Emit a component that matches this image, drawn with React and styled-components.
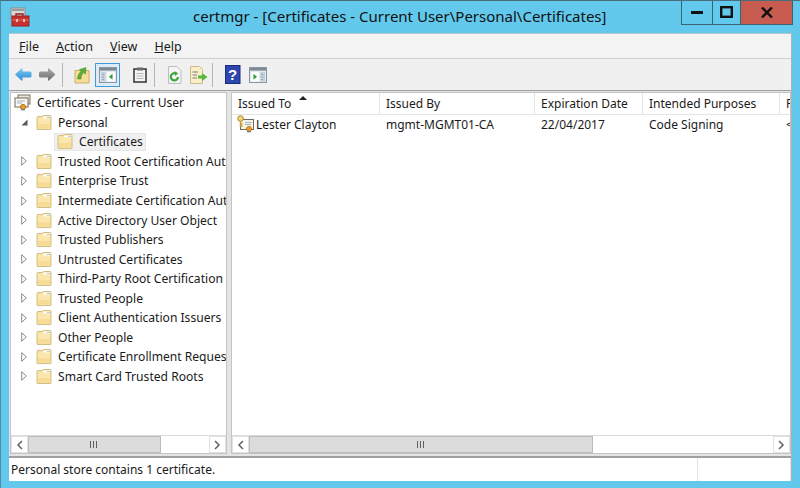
import React from 'react';
import styled, { createGlobalStyle } from 'styled-components';

const GlobalStyle = createGlobalStyle`
  html, body { margin: 0; padding: 0; background: #62c9ec; }
  body { font-family: "Noto Sans", "Open Sans", sans-serif; }
`;

const Win = styled.div`
  width: 800px;
  height: 488px;
  box-sizing: border-box;
  background: #62c9ec;
  border-top: 1px solid #4a6d7c;
  border-left: 1px solid #4f8ea6;
  overflow: hidden;
  display: flex;
  flex-direction: column;
  padding: 0 8px 7px 8px;
  color: #1a1a1a;
`;

const TitleBar = styled.div`
  height: 32px;
  flex: none;
  display: flex;
  align-items: flex-start;
  position: relative;
`;

const AppIcon = styled.div`
  width: 20px;
  height: 20px;
  margin-top: 6px;
  margin-left: 1px;
`;

const Title = styled.div`
  position: absolute;
  left: 184px;
  top: 5px;
  font-size: 15px;
  line-height: 20px;
  color: #111;
  white-space: nowrap;
`;

const Controls = styled.div`
  position: absolute;
  right: -1px;
  top: -1px;
  display: flex;
  height: 24px;
  border: 1px solid #3c6170;
  border-top: none;
`;

const Ctl = styled.div`
  width: ${(p) => p.$w}px;
  display: flex;
  align-items: center;
  justify-content: center;
  background: ${(p) => p.$bg || '#62c9ec'};
  border-left: ${(p) => (p.$first ? 'none' : '1px solid #3c6170')};
`;

const Client = styled.div`
  flex: 1;
  min-height: 0;
  display: flex;
  flex-direction: column;
  background: #f0f0f0;
  border-top: 1px solid #b9c6cb;
  border-right: 1px solid #a9b4b8;
`;

const MenuBar = styled.div`
  height: 24px;
  flex: none;
  display: flex;
  align-items: center;
  gap: 17px;
  padding-left: 10px;
  font-size: 12.5px;
  background: #f3f3f3;
  border-bottom: 1px solid #cfcfcf;
  u { text-underline-offset: 1px; }
`;

const ToolBar = styled.div`
  height: 31px;
  flex: none;
  display: flex;
  align-items: center;
  padding-left: 2px;
  background: #f0f0f0;
  border-bottom: 1px solid #a0a0a0;
`;

const ToolBtn = styled.div`
  width: ${(p) => p.$w || 24}px;
  height: 24px;
  box-sizing: border-box;
  display: flex;
  align-items: center;
  justify-content: center;
  flex: none;
  margin-left: ${(p) => p.$gap || 0}px;
  padding-left: ${(p) => p.$pad || 0}px;
  ${(p) => p.$active && 'background: #dcebf8; border: 1px solid #3f9ad8;'}
`;

const Sep = styled.div`
  width: 1px;
  height: 24px;
  background: #b5b5b5;
  margin: 0 3px;
  flex: none;
`;

const Panes = styled.div`
  flex: 1;
  min-height: 0;
  display: flex;
  gap: 4px;
  padding: 1px 0 2px 1px;
  background: #e4e4e4;
  border-bottom: 2px solid #a0a0a0;
`;

const Pane = styled.div`
  width: ${(p) => p.$w};
  flex: ${(p) => (p.$grow ? 1 : 'none')};
  min-width: 0;
  display: flex;
  flex-direction: column;
  background: #fff;
  border: 1px solid #c4c4c4;
  box-sizing: border-box;
  overflow: hidden;
`;

const Scroller = styled.div`
  flex: 1;
  min-height: 0;
  overflow: hidden;
`;

const Row = styled.div`
  height: 19.55px;
  display: flex;
  align-items: center;
  padding-left: ${(p) => p.$indent}px;
  font-size: 12.1px;
  white-space: nowrap;
  svg { flex: none; }
`;

const Twisty = styled.div`
  width: 19px;
  flex: none;
  display: flex;
  justify-content: flex-start;
  padding-left: 4px;
  box-sizing: border-box;
`;

const RowLabel = styled.span`
  margin-left: 6px;
  flex: none;
`;

const SelectedItem = styled.div`
  display: flex;
  align-items: center;
  height: 18px;
  padding-right: 2px;
  padding-left: 2px;
  margin-left: -3px;
  background: #f0f0f0;
  border: 1px solid #e6e6e6;
  box-sizing: border-box;
`;

const Bar = styled.div`
  height: 18px;
  flex: none;
  display: flex;
  background: #fff;
  border-top: 1px solid #dcdcdc;
  box-sizing: border-box;
`;

const BarBtn = styled.div`
  width: 17px;
  flex: none;
  display: flex;
  align-items: center;
  justify-content: center;
  border: 1px solid #e2e2e2;
  box-sizing: border-box;
`;

const Track = styled.div`
  flex: 1;
  min-width: 0;
  display: flex;
`;

const Thumb = styled.div`
  width: ${(p) => p.$w}px;
  flex: none;
  display: flex;
  align-items: center;
  justify-content: center;
  background: #dcdcdc;
  border: 1px solid #bcbcbc;
  box-sizing: border-box;
`;

const Grip = styled.div`
  width: 9px;
  height: 7px;
  background: repeating-linear-gradient(90deg, #606060 0 1px, transparent 1px 3px);
`;

const ListHead = styled.div`
  height: 21px;
  flex: none;
  display: flex;
  border-bottom: 1px solid #e5e5e5;
  font-size: 12px;
`;

const HeadCell = styled.div`
  width: ${(p) => p.$w}px;
  flex: none;
  box-sizing: border-box;
  padding-left: 6px;
  border-right: 1px solid #e5e5e5;
  line-height: 21px;
  position: relative;
  white-space: nowrap;
  overflow: hidden;
`;

const SortMark = styled.span`
  position: absolute;
  left: 67px;
  top: 3px;
  width: 0;
  height: 0;
  border-left: 4px solid transparent;
  border-right: 4px solid transparent;
  border-bottom: 4px solid #222;
`;

const ListRow = styled.div`
  height: 18px;
  display: flex;
  align-items: center;
  font-size: 12px;
`;

const Cell = styled.div`
  width: ${(p) => p.$w}px;
  flex: none;
  box-sizing: border-box;
  padding-left: ${(p) => p.$pad ?? 6}px;
  display: flex;
  align-items: center;
  gap: 1px;
  white-space: nowrap;
  overflow: hidden;
  svg { flex: none; }
`;

const StatusBar = styled.div`
  height: 23px;
  flex: none;
  display: flex;
  background: #fff;
  font-size: 12px;
  line-height: 23px;
`;

const StatusCell = styled.div`
  width: ${(p) => p.$w};
  flex: ${(p) => (p.$grow ? 1 : 'none')};
  box-sizing: border-box;
  padding-left: 2px;
  border-right: 1px solid #e2e2e2;
  white-space: nowrap;
`;

function Folder() {
  return (
    <svg width="16" height="15" viewBox="0 0 16 15">
      <path d="M1 2.5 Q1 1.5 2 1.5 H6 L7.5 0.5 H14 Q15 0.5 15 1.5 V14 Q15 14.5 14.5 14.5 H1.5 Q1 14.5 1 14 Z" fill="#f9e4a8" stroke="#d4bd82" />
      <path d="M7.5 1.5 H14 V3.5 H6.5 Z" fill="#fdfaf0" />
      <path d="M11 2 H14 V3 H11 Z" fill="#a9d3e8" />
      <path d="M2 4 H14 V13.5 H2 Z" fill="#fbe6ad" />
      <path d="M2 9 H14 V13.5 H2 Z" fill="#f7dc96" />
    </svg>
  );
}

function Chevron({ dir }) {
  return (
    <svg width="7" height="10" viewBox="0 0 7 10">
      <path d={dir === 'left' ? 'M6 1 L2 5 L6 9' : 'M1 1 L5 5 L1 9'} fill="none" stroke="#606060" strokeWidth="1.5" />
    </svg>
  );
}

function Scrollbar({ thumb }) {
  return (
    <Bar>
      <BarBtn><Chevron dir="left" /></BarBtn>
      <Track>
        <Thumb $w={thumb}><Grip /></Thumb>
      </Track>
      <BarBtn><Chevron dir="right" /></BarBtn>
    </Bar>
  );
}

function Twist({ kind }) {
  if (kind === 'open') {
    return (
      <svg width="7" height="7" viewBox="0 0 7 7"><path d="M6.5 0.5 V6.5 H0.5 Z" fill="#595959" /></svg>
    );
  }
  return (
    <svg width="6" height="10" viewBox="0 0 6 10"><path d="M0.7 0.7 L5.3 5 L0.7 9.3 Z" fill="#fff" stroke="#8a8a8a" /></svg>
  );
}

function CertStore() {
  return (
    <svg width="17" height="17" viewBox="0 0 17 17">
      <rect x="4" y="1" width="12" height="9" fill="#e8e2d2" stroke="#7a7468" />
      <rect x="1" y="4" width="13" height="9" fill="#fbf9f2" stroke="#6e6a60" />
      <path d="M3 7 H11 M3 9 H8" stroke="#9bb0c4" />
      <circle cx="9" cy="13" r="2.6" fill="#e3a12c" stroke="#b9761a" />
      <path d="M8 15 V16.5 M10 15 V16.5" stroke="#3d6fb3" strokeWidth="1.2" />
    </svg>
  );
}

function CertKey() {
  return (
    <svg width="18" height="18" viewBox="0 0 18 18">
      <rect x="3.5" y="4.5" width="13" height="10" fill="#f5f1e4" stroke="#6e6a60" />
      <path d="M8 7.5 H15 M8 9.5 H14" stroke="#a8b4c0" />
      <circle cx="3.5" cy="3.5" r="2.8" fill="#f3d27c" stroke="#b08a2c" />
      <path d="M3.5 6 V12 M3.5 9 H5.5 M3.5 11 H5.5" stroke="#c29a3a" strokeWidth="1.5" />
      <circle cx="12" cy="14" r="2.5" fill="#e3a12c" stroke="#b9761a" />
      <path d="M11 16 V17.5 M13 16 V17.5" stroke="#3d6fb3" strokeWidth="1.2" />
    </svg>
  );
}

const NAV_BACK = 'M1 7.5 L7.5 1.5 Q8.5 1 8.5 2 V4.5 H16 Q17.5 4.5 17.5 6 V9 Q17.5 10.5 16 10.5 H8.5 V13 Q8.5 14 7.5 13.5 Z';
const NAV_FWD = 'M17.5 7.5 L11 1.5 Q10 1 10 2 V4.5 H2.5 Q1 4.5 1 6 V9 Q1 10.5 2.5 10.5 H10 V13 Q10 14 11 13.5 Z';

function Nav({ forward }) {
  const id = forward ? 'navFwd' : 'navBack';
  return (
    <svg width="18" height="15" viewBox="0 0 18 15">
      <defs>
        <linearGradient id={id} x1="0" y1="0" x2="0" y2="1">
          <stop offset="0" stopColor={forward ? '#a8a8a8' : '#7cc8f2'} />
          <stop offset="1" stopColor={forward ? '#707070' : '#2b8ed6'} />
        </linearGradient>
      </defs>
      <path d={forward ? NAV_FWD : NAV_BACK} fill={`url(#${id})`} />
    </svg>
  );
}

function UpFolder() {
  return (
    <svg width="16" height="18" viewBox="0 0 16 18">
      <path d="M1 4.5 H15 V17 H1 Z" fill="#f6dc96" stroke="#c9ae68" />
      <path d="M3.5 13 C4 9 5 7 7 5.5 L5.5 3.5 L12 1.5 L11.5 8 L9.8 6.6 C8 8 7 10 7 13 Z" fill="#5cae3a" stroke="#3f8a24" strokeWidth="0.5" />
    </svg>
  );
}

function Console({ right }) {
  return (
    <svg width="18" height="16" viewBox="0 0 18 16">
      <rect x="0.5" y="0.5" width="17" height="15" fill="#e3e8ec" stroke="#8c96a0" />
      <rect x="1" y="1" width="16" height="2.6" fill="#7d8a96" />
      {right ? (
        <>
          <rect x="2" y="5" width="8" height="9.5" fill="#fafcfd" />
          <rect x="11.5" y="5" width="4.5" height="9.5" fill="#c2d0dc" />
          <path d="M4.5 6.8 L8 9.75 L4.5 12.7 Z" fill="#2f9a3a" />
          <path d="M13 7 V8 M13 9.5 V10.5 M13 12 V13" stroke="#6c87a0" />
        </>
      ) : (
        <>
          <rect x="2" y="5" width="4.5" height="9.5" fill="#c2d0dc" />
          <rect x="8" y="5" width="8" height="9.5" fill="#fafcfd" />
          <path d="M13.5 6.8 L10 9.75 L13.5 12.7 Z" fill="#2f9a3a" />
          <path d="M4 7 V8 M4 9.5 V10.5 M4 12 V13" stroke="#6c87a0" />
        </>
      )}
    </svg>
  );
}

function Clipboard() {
  return (
    <svg width="14" height="16" viewBox="0 0 14 16">
      <rect x="1" y="2" width="12" height="13" fill="#f4f4f4" stroke="#3d3d3d" strokeWidth="1.6" />
      <rect x="4" y="0.5" width="6" height="3" fill="#6a6a6a" />
      <path d="M3.5 6.5 H10.5 M3.5 9 H10.5 M3.5 11.5 H10.5" stroke="#b5b5b5" />
    </svg>
  );
}

function Refresh() {
  return (
    <svg width="15" height="18" viewBox="0 0 15 18">
      <path d="M1.5 0.5 H10 L14 4.5 V17.5 H1.5 Z" fill="#f4f4f4" stroke="#bdbdbd" />
      <path d="M11 11 A3.6 3.6 0 1 1 9 7.6" fill="none" stroke="#3da63d" strokeWidth="2.2" />
      <path d="M7.5 5 L11.2 7.5 L8 10 Z" fill="#3da63d" />
    </svg>
  );
}

function Export() {
  return (
    <svg width="19" height="18" viewBox="0 0 19 18">
      <path d="M1.5 0.5 H10.5 L13.5 3.5 V17.5 H1.5 Z" fill="#f8efc8" stroke="#c9bd8c" />
      <path d="M3.5 6 H9 M3.5 9 H8 M3.5 12 H8" stroke="#7f7f7f" strokeWidth="1.2" />
      <path d="M9 9.5 H13 V7 L18.5 11 L13 15 V12.5 H9 Z" fill="#58b53d" />
    </svg>
  );
}

function HelpBook() {
  return (
    <svg width="16" height="19" viewBox="0 0 16 19">
      <rect x="0.5" y="0.5" width="14.5" height="18" fill="#2d46b0" stroke="#1b2a78" />
      <text x="7.7" y="15" textAnchor="middle" fontSize="15" fontWeight="700" fill="#fff" fontFamily="Liberation Sans, sans-serif">?</text>
    </svg>
  );
}

function ToolboxIcon() {
  return (
    <svg width="20" height="20" viewBox="0 0 20 20">
      <rect x="1" y="1" width="14" height="11" fill="#d9d9d9" stroke="#8a8a8a" />
      <rect x="2" y="2" width="12" height="2" fill="#9a9a9a" />
      <path d="M6 9 V7 H13 V9" fill="none" stroke="#8f2020" strokeWidth="1.4" />
      <rect x="2" y="9" width="17" height="10" fill="#c8312f" stroke="#9a2020" />
      <path d="M2 13 H19" stroke="#e8706a" />
      <rect x="6" y="12" width="2" height="3" fill="#f3c0b0" />
      <rect x="13" y="12" width="2" height="3" fill="#f3c0b0" />
    </svg>
  );
}

const stores = [
  'Trusted Root Certification Authorities',
  'Enterprise Trust',
  'Intermediate Certification Authorities',
  'Active Directory User Object',
  'Trusted Publishers',
  'Untrusted Certificates',
  'Third-Party Root Certification Authorities',
  'Trusted People',
  'Client Authentication Issuers',
  'Other People',
  'Certificate Enrollment Requests',
  'Smart Card Trusted Roots',
];

export default function App() {
  return (
    <Win>
      <GlobalStyle />
      <TitleBar>
        <AppIcon><ToolboxIcon /></AppIcon>
        <Title>certmgr - [Certificates - Current User\Personal\Certificates]</Title>
        <Controls>
          <Ctl $w={30} $first>
            <svg width="12" height="4" viewBox="0 0 12 4"><rect width="12" height="3" y="1" fill="#111" /></svg>
          </Ctl>
          <Ctl $w={27}>
            <svg width="13" height="12" viewBox="0 0 13 12"><rect x="1.2" y="1.2" width="10.6" height="9.6" fill="none" stroke="#111" strokeWidth="2.4" /></svg>
          </Ctl>
          <Ctl $w={51} $bg="#c75b50">
            <svg width="12" height="11" viewBox="0 0 12 11"><path d="M1 0.5 L11 10.5 M11 0.5 L1 10.5" stroke="#111" strokeWidth="2.4" /></svg>
          </Ctl>
        </Controls>
      </TitleBar>
      <Client>
        <MenuBar>
          <span><u>F</u>ile</span>
          <span><u>A</u>ction</span>
          <span><u>V</u>iew</span>
          <span><u>H</u>elp</span>
        </MenuBar>
        <ToolBar>
          <ToolBtn><Nav /></ToolBtn>
          <ToolBtn><Nav forward /></ToolBtn>
          <Sep />
          <ToolBtn $w={29} $pad={2}><UpFolder /></ToolBtn>
          <ToolBtn $w={25} $active><Console /></ToolBtn>
          <ToolBtn $w={31} $pad={8}><Clipboard /></ToolBtn>
          <Sep />
          <ToolBtn $w={25} $gap={4}><Refresh /></ToolBtn>
          <ToolBtn $w={22}><Export /></ToolBtn>
          <Sep />
          <ToolBtn $w={25} $gap={4}><HelpBook /></ToolBtn>
          <ToolBtn $w={25}><Console right /></ToolBtn>
        </ToolBar>
        <Panes>
          <Pane $w="217px">
            <Scroller>
              <Row $indent={3}>
                <CertStore />
                <RowLabel>Certificates - Current User</RowLabel>
              </Row>
              <Row $indent={6}>
                <Twisty><Twist kind="open" /></Twisty>
                <Folder />
                <RowLabel>Personal</RowLabel>
              </Row>
              <Row $indent={46}>
                <SelectedItem>
                  <Folder />
                  <RowLabel>Certificates</RowLabel>
                </SelectedItem>
              </Row>
              {stores.map((name) => (
                <Row $indent={6} key={name}>
                  <Twisty><Twist /></Twisty>
                  <Folder />
                  <RowLabel>{name}</RowLabel>
                </Row>
              ))}
            </Scroller>
            <Scrollbar thumb={133} />
          </Pane>
          <Pane $grow>
            <ListHead>
              <HeadCell $w={148}>Issued To<SortMark /></HeadCell>
              <HeadCell $w={155}>Issued By</HeadCell>
              <HeadCell $w={108}>Expiration Date</HeadCell>
              <HeadCell $w={137}>Intended Purposes</HeadCell>
              <HeadCell $w={12}>Friendly Name</HeadCell>
            </ListHead>
            <Scroller>
              <ListRow>
                <Cell $w={148} $pad={5}><CertKey /><span>Lester Clayton</span></Cell>
                <Cell $w={155}>mgmt-MGMT01-CA</Cell>
                <Cell $w={108}>22/04/2017</Cell>
                <Cell $w={137}>Code Signing</Cell>
                <Cell $w={12}>&lt;</Cell>
              </ListRow>
            </Scroller>
            <Scrollbar thumb={344} />
          </Pane>
        </Panes>
        <StatusBar>
          <StatusCell $grow>Personal store contains 1 certificate.</StatusCell>
          <StatusCell $w="93px" />
        </StatusBar>
      </Client>
    </Win>
  );
}
